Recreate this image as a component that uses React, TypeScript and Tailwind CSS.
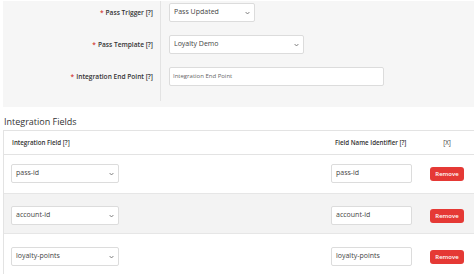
import React from 'react';

const Chevron: React.FC = () => (
  <svg width="5" height="4" viewBox="0 0 5 4" className="shrink-0">
    <path d="M0.6 1 L2.5 3 L4.4 1" fill="none" stroke="#666" strokeWidth="0.8" />
  </svg>
);

const FakeSelect: React.FC<{ value: string; width: string; height?: string }> = ({ value, width, height = 'h-[19px]' }) => (
  <div className={`${width} ${height} bg-white border border-[#dcdcdc] rounded-[2px] flex items-center justify-between pl-[4px] pr-[4px] text-[7px] text-[#444]`}>
    <span>{value}</span>
    <Chevron />
  </div>
);

const Label: React.FC<{ text: string }> = ({ text }) => (
  <div className="h-[19px] flex items-center justify-end text-[6.6px] font-semibold text-[#333]">
    <span className="text-[#d43f3a] mr-[2px]">*</span>
    {text}
  </div>
);

const rows = [
  { field: 'pass-id', name: 'pass-id', pt: 'pt-[9px]', bg: 'bg-white', h: 'h-[39px]' },
  { field: 'account-id', name: 'account-id', pt: 'pt-[12px]', bg: 'bg-[#f3f3f3]', h: 'h-[40px]' },
  { field: 'loyalty-points', name: 'loyalty-points', pt: 'pt-[13px]', bg: 'bg-white', h: 'h-[41px]' },
];

export default function App() {
  return (
    <div className="w-[474px] h-[274px] bg-white overflow-hidden font-['Open_Sans',sans-serif]">
      {/* Pass settings panel */}
      <div className="ml-[3px] mt-[1px] h-[106px] bg-[#f6f6f6] flex">
        <div className="w-[158px] border-r border-[#e3e3e3] flex flex-col gap-[13px] pt-[2px] pr-[7px] mb-[6px]">
          <Label text="Pass Trigger [?]" />
          <Label text="Pass Template [?]" />
          <Label text="Integration End Point [?]" />
        </div>
        <div className="flex flex-col gap-[13px] pt-[2px] pl-[8px]">
          <FakeSelect value="Pass Updated" width="w-[86px]" />
          <FakeSelect value="Loyalty Demo" width="w-[135px]" />
          <div className="w-[215px] h-[19px] bg-white border border-[#dcdcdc] rounded-[2px] flex items-center pl-[3px] text-[6px] text-[#666]">
            Integration End Point
          </div>
        </div>
      </div>

      {/* Integration fields */}
      <div className="pl-[4px] mt-[9px] text-[9px] leading-[12px] text-[#333]">Integration Fields</div>
      <div className="ml-[3px] mt-[2px] border-l border-t border-[#e3e3e3]">
        <div className="h-[24px] flex items-center border-b border-[#e3e3e3] text-[6.2px] font-semibold text-[#333]">
          <div className="w-[320px] pl-[8px]">Integration Field [?]</div>
          <div className="w-[98px] pl-[11px]">Field Name Identifier [?]</div>
          <div className="w-[50px] text-center font-normal">[X]</div>
        </div>
        {rows.map((r) => (
          <div key={r.field} className={`${r.h} ${r.bg} ${r.pt} flex items-start border-b border-[#e6e6e6]`}>
            <div className="w-[320px] pl-[7px]">
              <FakeSelect value={r.field} width="w-[108px]" height="h-[19px]" />
            </div>
            <div className="w-[98px] pl-[7px]">
              <div className="w-[81px] h-[19px] bg-white border border-[#dcdcdc] rounded-[2px] flex items-center pl-[4px] text-[7px] text-[#444]">
                {r.name}
              </div>
            </div>
            <div className="w-[50px] flex justify-center pt-[3px]">
              <div className="w-[34px] h-[14px] bg-[#e53935] rounded-[3px] flex items-center justify-center text-white text-[6px] font-semibold">
                Remove
              </div>
            </div>
          </div>
        ))}
      </div>
    </div>
  );
}
